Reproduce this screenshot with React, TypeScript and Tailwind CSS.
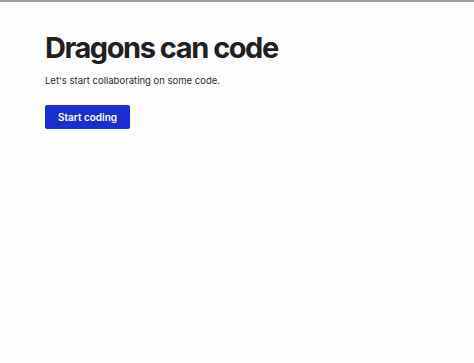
export default function App() {
  return (
    <div className="w-[474px] h-[363px] bg-[#fdfdfd] border-t-2 border-[#a0a0a0] overflow-hidden" style={{ fontFamily: 'Inter, "Noto Sans", sans-serif' }}>
      <div className="pl-[45px] pt-[28px]">
        <h1 className="text-[29px] leading-[36px] font-bold tracking-[-0.05em] text-[#1f2023]">Dragons can code</h1>
        <p className="mt-[9px] text-[9.5px] leading-[12px] text-[#2a2b2e]">Let's start collaborating on some code.</p>
        <button className="mt-[18px] h-[24px] w-[85px] rounded-[2px] bg-[#1a2fcf] text-white text-[10px] font-semibold block">Start coding</button>
      </div>
    </div>
  );
}
